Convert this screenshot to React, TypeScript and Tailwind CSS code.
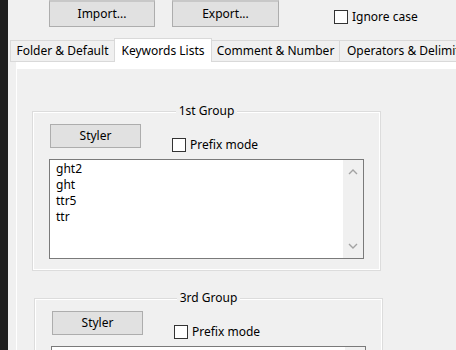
import React from "react";

const font = { fontFamily: '"Noto Sans", "Segoe UI", sans-serif' };

function Btn({ label, w }: { label: string; w: string }) {
  return (
    <div
      className={`${w} h-[24px] bg-[#e1e1e1] border border-[#adadad] flex items-center justify-center text-[12px] text-black`}
    >
      {label}
    </div>
  );
}

function Check({ label }: { label: string }) {
  return (
    <div className="flex items-center gap-[4px] text-[12px] text-black">
      <div className="w-[14px] h-[14px] bg-white border border-[#333333]" />
      <span>{label}</span>
    </div>
  );
}

function ListBox({ items }: { items: string[] }) {
  return (
    <div className="w-[315px] h-[100px] bg-white border border-[#7a7a7a] flex">
      <div className="flex-1 pl-[6px] pt-[1px] text-[12px] leading-[16px] text-black">
        {items.map((t) => (
          <div key={t}>{t}</div>
        ))}
      </div>
      <div className="w-[20px] bg-[#f0f0f0] flex flex-col items-center justify-between py-[9px]">
        <svg width="10" height="6" viewBox="0 0 10 6">
          <path d="M1 5 L5 1 L9 5" fill="none" stroke="#a3a3a3" strokeWidth="1.4" />
        </svg>
        <svg width="10" height="6" viewBox="0 0 10 6">
          <path d="M1 1 L5 5 L9 1" fill="none" stroke="#a3a3a3" strokeWidth="1.4" />
        </svg>
      </div>
    </div>
  );
}

function Group({
  title,
  items,
  cls,
}: {
  title: string;
  items: string[];
  cls: string;
}) {
  return (
    <div className={`relative w-[349px] border border-[#dcdcdc] ${cls}`}>
      <div className="absolute -top-[9px] left-0 right-0 flex justify-center">
        <span className="bg-[#f0f0f0] px-[3px] text-[12px] leading-[16px] text-black">
          {title}
        </span>
      </div>
      <div className="border border-white h-full pl-[16px] pt-[11px]">
        <div className="flex items-start">
          <Btn label="Styler" w="w-[91px]" />
          <div className="ml-[31px] mt-[12px]">
            <Check label="Prefix mode" />
          </div>
        </div>
        <div className="mt-[5px] -ml-[1px]">
          <ListBox items={items} />
        </div>
      </div>
    </div>
  );
}

export default function App() {
  return (
    <div
      className="w-[456px] h-[350px] overflow-hidden flex bg-[#f0f0f0]"
      style={font}
    >
      <div className="w-[8px] shrink-0 bg-[#1f1f1f]" />
      <div className="flex-1 flex flex-col min-w-0">
        {/* top row */}
        <div className="flex items-start h-[38px] shrink-0">
          <div className="ml-[41px] mt-0 shrink-0">
            <div className="w-[106px] h-[27px] bg-[#e1e1e1] border border-[#adadad] border-t-[#c8c8c8] border-t-2 flex items-center justify-center text-[12px] text-black">
              Import...
            </div>
          </div>
          <div className="ml-[17px] shrink-0">
            <div className="w-[107px] h-[27px] bg-[#e1e1e1] border border-[#adadad] border-t-[#c8c8c8] border-t-2 flex items-center justify-center text-[12px] text-black">
              Export...
            </div>
          </div>
          <div className="ml-[55px] mt-[8px] shrink-0">
            <Check label="Ignore case" />
          </div>
        </div>
        {/* tabs */}
        <div className="relative h-[24px] shrink-0 flex items-end pl-[2px] whitespace-nowrap overflow-hidden">
          <div className="shrink-0 w-[104px] h-[22px] border border-[#d9d9d9] border-r-0 bg-[#f0f0f0] flex items-center justify-center text-[12px] text-black">
            Folder &amp; Default
          </div>
          <div className="shrink-0 relative z-10 w-[98px] h-[25px] -mb-[1px] border border-[#d9d9d9] border-b-0 bg-white flex items-center justify-center text-[12px] text-black">
            Keywords Lists
          </div>
          <div className="shrink-0 w-[128px] h-[22px] border border-[#d9d9d9] border-l-0 bg-[#f0f0f0] flex items-center justify-center text-[12px] text-black">
            Comment &amp; Number
          </div>
          <div className="shrink-0 w-[140px] h-[22px] border border-[#d9d9d9] border-l-0 bg-[#f0f0f0] flex items-center pl-[7px] text-[12px] text-black">
            Operators &amp; Delimiter
          </div>
        </div>
        {/* panel */}
        <div className="flex-1 ml-[8px] bg-white pt-[7px] pl-[1px]">
          <div className="h-full bg-[#f0f0f0] pl-[15px] pt-[42px]">
            <Group
              title="1st Group"
              items={["ght2", "ght", "ttr5", "ttr"]}
              cls="h-[160px]"
            />
            <Group
              title="3rd Group"
              items={[]}
              cls="h-[160px] mt-[27px] ml-[2px]"
            />
          </div>
        </div>
      </div>
    </div>
  );
}
